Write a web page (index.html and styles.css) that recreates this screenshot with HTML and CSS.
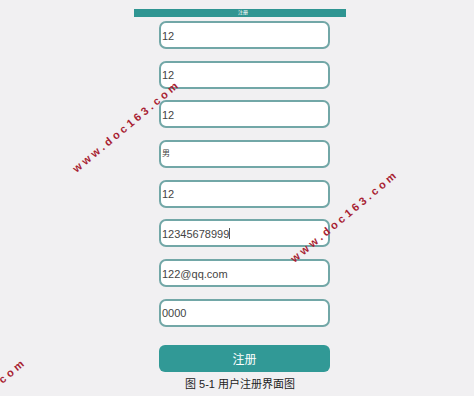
FILE: index.html
```html
<!DOCTYPE html>
<html>
<head>
<meta charset="utf-8">
<link rel="stylesheet" href="styles.css">
</head>
<body>
<div class="page">
  <div class="top-bar">注册</div>
  <div class="form">
    <div class="field">12</div>
    <div class="field">12</div>
    <div class="field">12</div>
    <div class="field field-small">男</div>
    <div class="field">12</div>
    <div class="field">12345678999<span class="caret"></span></div>
    <div class="field">122@qq.com</div>
    <div class="field">0000</div>
    <div class="btn">注册</div>
  </div>
  <div class="caption">图 5-1 用户注册界面图</div>
</div>
<div class="wm-layer">
  <div class="wm wm1">www.doc163.com</div>
  <div class="wm wm2">www.doc163.com</div>
  <div class="wm wm3">www.doc163.com</div>
</div>
</body>
</html>
```
FILE: styles.css
```css
html, body {
  margin: 0;
  padding: 0;
  background: #f1f0f2;
  font-family: "Liberation Sans", "Noto Sans CJK SC", sans-serif;
  overflow: hidden;
}
.page {
  width: 474px;
  height: 396px;
  padding-top: 9px;
  box-sizing: border-box;
}
.top-bar {
  margin-left: 134px;
  width: 212px;
  height: 8px;
  background: #2f9592;
  color: #fff;
  font-size: 5px;
  line-height: 6px;
  text-align: center;
  padding-left: 6px;
  box-sizing: border-box;
}
.form {
  margin-left: 159px;
  width: 171px;
  margin-top: 4px;
  display: flex;
  flex-direction: column;
  gap: 11.7px;
}
.field {
  height: 28px;
  box-sizing: border-box;
  border: 2px solid #72a7a7;
  border-radius: 7px;
  background: #fff;
  font-size: 11px;
  color: #444;
  display: flex;
  align-items: center;
  padding-left: 1px;
  padding-top: 1px;
}
.field-small {
  font-size: 8px;
  align-items: flex-start;
  padding-top: 5px;
}
.caret {
  display: inline-block;
  width: 1px;
  height: 11px;
  background: #555;
}
.btn {
  margin-top: 6px;
  height: 27px;
  border-radius: 6px;
  background: #319996;
  color: #fff;
  font-size: 12px;
  display: flex;
  align-items: center;
  justify-content: center;
}
.caption {
  margin-top: 3px;
  text-align: center;
  font-size: 11px;
  color: #222;
  padding-left: 6px;
}
.wm-layer {
  position: absolute;
  left: 0;
  top: 0;
  width: 474px;
  height: 396px;
  overflow: hidden;
  pointer-events: none;
}
.wm {
  position: absolute;
  color: #a81e32;
  font-size: 11px;
  font-weight: bold;
  letter-spacing: 3.2px;
  transform-origin: left center;
  transform: rotate(-40deg);
  white-space: nowrap;
  line-height: 12px;
}
.wm1 { left: 74px; top: 164px; }
.wm2 { left: 292px; top: 254px; }
.wm3 { left: -80px; top: 442px; }
```
